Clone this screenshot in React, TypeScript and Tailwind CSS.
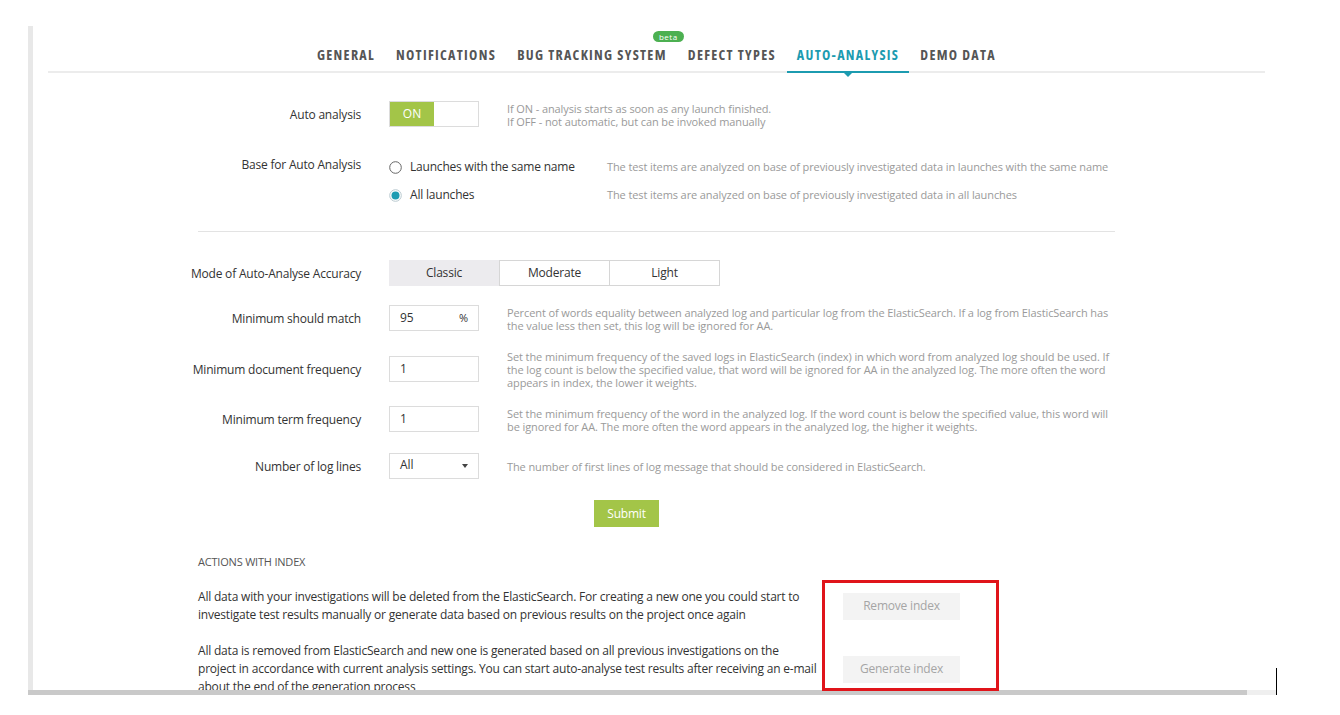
import React from "react";

function Radio({ checked }: { checked?: boolean }) {
  return (
    <svg width="13" height="13" viewBox="0 0 13 13" className="shrink-0">
      <circle cx="6.5" cy="6.5" r="5.8" fill="#fff" stroke={checked ? "#b9c9cf" : "#666"} strokeWidth="1" />
      {checked && <circle cx="6.5" cy="6.5" r="4" fill="#1d9cb2" />}
    </svg>
  );
}

function Row({ label, children, help }: { label: string; children: React.ReactNode; help?: React.ReactNode }) {
  return (
    <div className="flex h-[26px] items-center">
      <div className="flex w-[163px] shrink-0 justify-end whitespace-nowrap pt-[2px] text-[12px] tracking-[-0.2px] text-[#333]">{label}</div>
      <div className="ml-[28px] h-[26px] w-[90px] shrink-0">{children}</div>
      {help && <div className="ml-[28px] w-[610px] shrink-0 pt-[1px] text-[11px] leading-[13px] tracking-[-0.1px] text-[#9a9a9a]">{help}</div>}
    </div>
  );
}

const tabs = ["GENERAL", "NOTIFICATIONS", "BUG TRACKING SYSTEM", "DEFECT TYPES", "AUTO-ANALYSIS", "DEMO DATA"];

export default function App() {
  return (
    <div className="relative min-h-[715px] w-[1340px] bg-white font-['Open_Sans',sans-serif] text-[#333]">
      <div className="relative ml-[28px] w-[1249px] pt-[26px]">
        <div className="h-[664px] overflow-hidden border-l-[5px] border-[#e8e8e8]">
          <div className="ml-[15px] w-[1217px]">
            {/* Tabs */}
            <div className="flex h-[47px] justify-center border-b-2 border-[#ececec]">
              {tabs.map((t) => {
                const active = t === "AUTO-ANALYSIS";
                return (
                  <div key={t} className="relative mx-[0.5px] px-[10px] pt-[20px]">
                    <span
                      className={`block whitespace-nowrap font-['Open_Sans',sans-serif] font-stretch-condensed text-[14px] font-bold leading-[18px] tracking-[1.3px] ${active ? "text-[#1c9bb0]" : "text-[#555]"}`}
                    >
                      {t}
                    </span>
                    {active && (
                      <>
                        <span className="absolute bottom-[-2px] left-0 right-0 h-[2px] bg-[#1c9bb0]" />
                        <span className="absolute bottom-[-6px] left-1/2 -ml-[4px] h-0 w-0 border-x-[4px] border-t-[4px] border-x-transparent border-t-[#1c9bb0]" />
                      </>
                    )}
                    {t === "BUG TRACKING SYSTEM" && (
                      <span className="absolute right-[-7px] top-[5px] flex h-[11px] w-[31px] items-center justify-center rounded-full bg-[#4cb051] text-[8px] leading-none tracking-[0.5px] text-white">
                        beta
                      </span>
                    )}
                  </div>
                );
              })}
            </div>

            {/* Form */}
            <div className="mx-auto w-[917px]">
              <div className="mt-[28px]">
                <Row
                  label="Auto analysis"
                  help={
                    <>
                      If ON - analysis starts as soon as any launch finished.
                      <br />
                      If OFF - not automatic, but can be invoked manually
                    </>
                  }
                >
                  <div className="flex h-full w-full border border-[#dcdcdc]">
                    <div className="flex w-[44px] items-center justify-center bg-[#a3c548] text-[12px] text-white">ON</div>
                  </div>
                </Row>
              </div>

              <div className="mt-[31px] flex">
                <div className="-mt-[2px] flex w-[163px] shrink-0 justify-end whitespace-nowrap text-[12px] leading-[18px] tracking-[-0.2px]">Base for Auto Analysis</div>
                <div className="ml-[28px] flex flex-col gap-[10px]">
                  <div className="flex h-[18px] items-center">
                    <div className="flex w-[218px] items-center gap-[8px] text-[12px] tracking-[-0.2px]">
                      <Radio />
                      <span>Launches with the same name</span>
                    </div>
                    <span className="whitespace-nowrap text-[11px] tracking-[-0.1px] text-[#9a9a9a]">
                      The test items are analyzed on base of previously investigated data in launches with the same name
                    </span>
                  </div>
                  <div className="flex h-[18px] items-center">
                    <div className="flex w-[218px] items-center gap-[8px] text-[12px] tracking-[-0.2px]">
                      <Radio checked />
                      <span>All launches</span>
                    </div>
                    <span className="whitespace-nowrap text-[11px] tracking-[-0.1px] text-[#9a9a9a]">
                      The test items are analyzed on base of previously investigated data in all launches
                    </span>
                  </div>
                </div>
              </div>

              <div className="mt-[27px] h-px bg-[#e3e3e3]" />

              <div className="mt-[28px] flex h-[26px] items-center">
                <div className="flex w-[163px] shrink-0 justify-end whitespace-nowrap pt-[2px] text-[12px] tracking-[-0.2px]">Mode of Auto-Analyse Accuracy</div>
                <div className="ml-[28px] flex h-[26px] text-[12px] tracking-[-0.2px]">
                  <div className="flex w-[110px] items-center justify-center border border-[#ecebee] bg-[#ecebee]">Classic</div>
                  <div className="flex w-[111px] items-center justify-center border border-[#d6d6d6]">Moderate</div>
                  <div className="flex w-[110px] items-center justify-center border border-l-0 border-[#d6d6d6]">Light</div>
                </div>
              </div>

              <div className="mt-[19px]">
                <Row
                  label="Minimum should match"
                  help="Percent of words equality between analyzed log and particular log from the ElasticSearch. If a log from ElasticSearch has the value less then set, this log will be ignored for AA."
                >
                  <div className="flex h-full items-center justify-between border border-[#dcdcdc] pl-[10px] pr-[10px] text-[12px]">
                    <span>95</span>
                    <span className="text-[11px]">%</span>
                  </div>
                </Row>
              </div>

              <div className="mt-[25px]">
                <Row
                  label="Minimum document frequency"
                  help="Set the minimum frequency of the saved logs in ElasticSearch (index) in which word from analyzed log should be used. If the log count is below the specified value, that word will be ignored for AA in the analyzed log. The more often the word appears in index, the lower it weights."
                >
                  <div className="flex h-full items-center border border-[#dcdcdc] pl-[10px] text-[12px]">1</div>
                </Row>
              </div>

              <div className="mt-[24px]">
                <Row
                  label="Minimum term frequency"
                  help="Set the minimum frequency of the word in the analyzed log. If the word count is below the specified value, this word will be ignored for AA. The more often the word appears in the analyzed log, the higher it weights."
                >
                  <div className="flex h-full items-center border border-[#dcdcdc] pl-[10px] text-[12px]">1</div>
                </Row>
              </div>

              <div className="mt-[21px]">
                <Row label="Number of log lines" help="The number of first lines of log message that should be considered in ElasticSearch.">
                  <div className="flex h-full items-center justify-between border border-[#dcdcdc] pl-[10px] pr-[10px] text-[12px]">
                    <span className="-mt-[2px]">All</span>
                    <span className="h-0 w-0 border-x-[3.5px] border-t-[4px] border-x-transparent border-t-[#444]" />
                  </div>
                </Row>
              </div>

              <div className="mt-[21px] ml-[396px] flex h-[27px] w-[65px] items-center justify-center bg-[#a3c548] text-[12px] tracking-[-0.2px] text-white">Submit</div>

              <div className="mt-[27px] text-[11px] leading-[16px] tracking-[-0.2px] text-[#555]">ACTIONS WITH INDEX</div>

              <div className="mt-[18px] flex items-center">
                <p className="w-[620px] text-[12px] leading-[18px] tracking-[-0.2px] text-[#333]">
                  All data with your investigations will be deleted from the ElasticSearch. For creating a new one you could start to investigate test results manually or generate data based on previous results on the project once again
                </p>
                <div className="ml-[25px] flex h-[27px] w-[117px] items-center justify-center bg-[#f3f3f3] text-[12px] tracking-[-0.2px] text-[#a5a5a5]">Remove index</div>
              </div>

              <div className="mt-[18px] flex items-center">
                <p className="w-[620px] text-[12px] leading-[18px] tracking-[-0.2px] text-[#333]">
                  All data is removed from ElasticSearch and new one is generated based on all previous investigations on the project in accordance with current analysis settings. You can start auto-analyse test results after receiving an e-mail about the end of the generation process
                </p>
                <div className="ml-[25px] flex h-[27px] w-[117px] items-center justify-center bg-[#f3f3f3] text-[12px] tracking-[-0.2px] text-[#a5a5a5]">Generate index</div>
              </div>
            </div>
          </div>
        </div>
        <div className="flex h-[5px]">
          <div className="w-[1219px] bg-[#c9c9c9]" />
          <div className="flex-1 bg-[#efefef]" />
        </div>
        <div className="absolute bottom-0 right-0 h-[27px] w-px bg-black" />
      </div>

      <div className="absolute left-[822px] top-[580px] h-[111px] w-[177px] border-[3px] border-[#e0141a]" />
    </div>
  );
}
